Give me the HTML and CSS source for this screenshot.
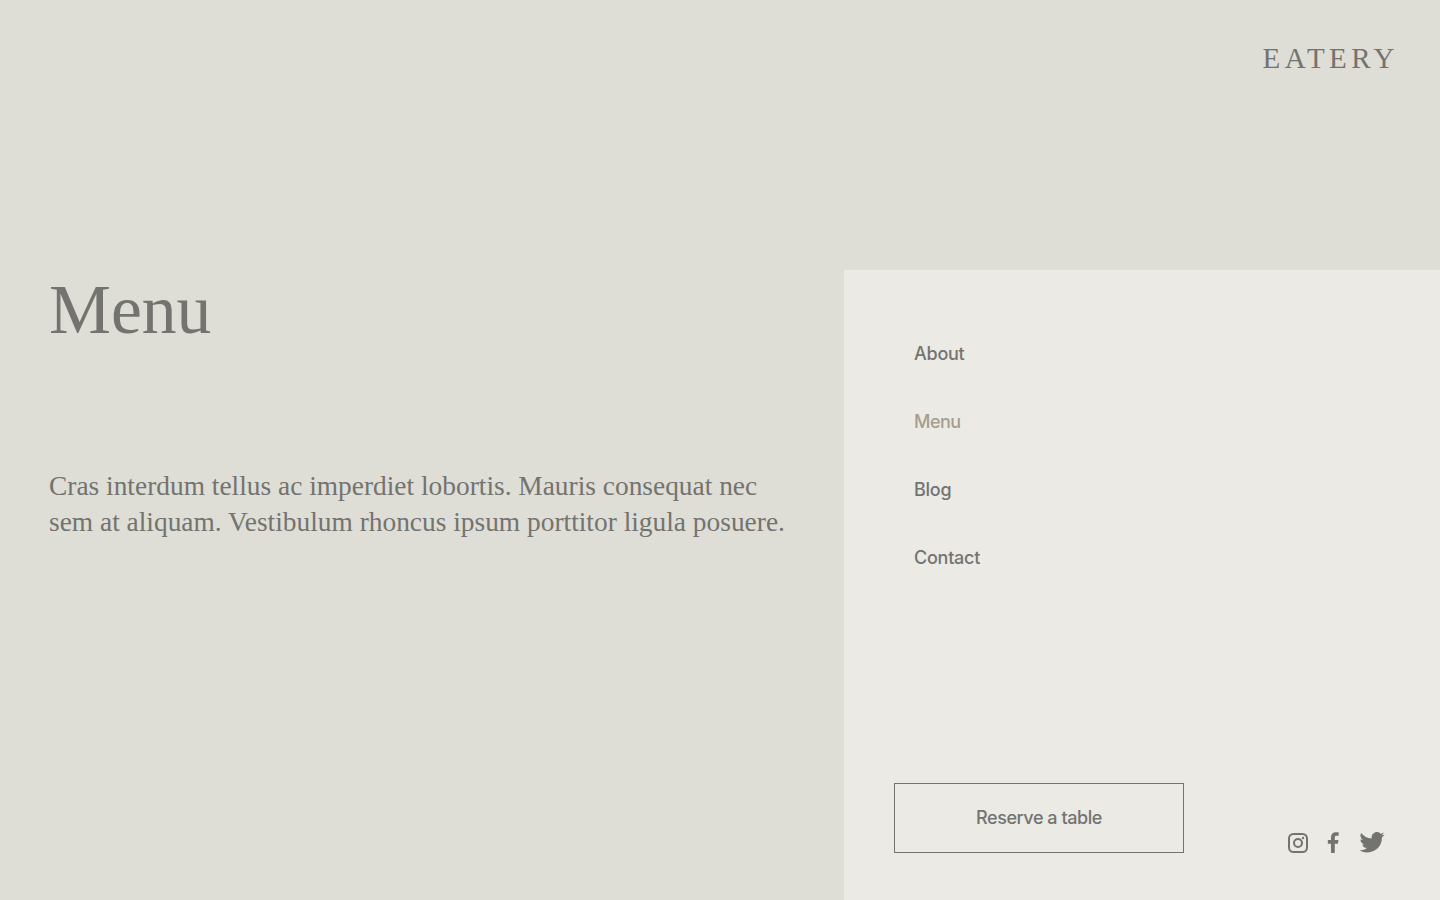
FILE: index.html
```html
<!DOCTYPE html>
<html lang="en">
<head>
    <meta charset="UTF-8">
    <meta name="viewport" content="width=device-width, initial-scale=1.0">
    <title>Eatery - Menu</title>
    <link rel="stylesheet" href="styles.css">
</head>
<body>

    <header class="top">
        <div class="logo">EATERY</div>
    </header>

    <div class="columns">
        <main class="content">
            <h1>Menu</h1>
            <p>Cras interdum tellus ac imperdiet lobortis. Mauris consequat nec sem at aliquam. Vestibulum rhoncus ipsum porttitor ligula posuere.</p>
        </main>

        <aside class="panel">
            <nav class="nav">
                <a href="#">About</a>
                <a href="#" class="active">Menu</a>
                <a href="#">Blog</a>
                <a href="#">Contact</a>
            </nav>

            <div class="panel-bottom">
                <a href="#" class="reserve">Reserve a table</a>
                <div class="social">
                    <svg class="icon-insta" width="20" height="20" viewBox="0 0 20 20" fill="none" stroke="#737370" stroke-width="2">
                        <rect x="1" y="1" width="18" height="18" rx="4.5"/>
                        <circle cx="10" cy="10" r="4"/>
                        <circle cx="15" cy="5" r="1.2" fill="#737370" stroke="none"/>
                    </svg>
                    <svg class="icon-fb" width="13" height="21" viewBox="0 0 12 20" fill="#737370">
                        <path d="M3.6 20V11.2H.6V7.700h3V5.100C3.600 2 5.500.3 8.200.3c1.300 0 2.400.1 2.700.1v3.200H9c-1.500 0-1.800.7-1.800 1.800v2.300h3.500l-.5 3.500h-3V20z"/>
                    </svg>
                    <svg class="icon-tw" width="26" height="21" viewBox="0 0 24 20" fill="#737370">
                        <path d="M24 2.400a9.800 9.800 0 0 1-2.800.8A4.900 4.900 0 0 0 23.300.5a9.800 9.800 0 0 1-3.100 1.200 4.900 4.900 0 0 0-8.400 4.500A14 14 0 0 1 1.700.9a4.900 4.900 0 0 0 1.500 6.600 4.900 4.900 0 0 1-2.200-.6v.1a4.900 4.900 0 0 0 3.900 4.800 4.900 4.900 0 0 1-2.200.1 4.900 4.900 0 0 0 4.600 3.400A9.900 9.900 0 0 1 0 17.300 14 14 0 0 0 7.500 19.500c9.100 0 14-7.500 14-14v-.6A10 10 0 0 0 24 2.400z"/>
                    </svg>
                </div>
            </div>
        </aside>
    </div>

</body>
</html>
```

FILE: styles.css
```css
* {
    box-sizing: border-box;
}

html, body {
    margin: 0;
    height: 100%;
}

body {
    display: flex;
    flex-direction: column;
    background-color: #deded6;
    color: #737370;
    font-family: "Liberation Serif", serif;
    overflow: hidden;
}

.top {
    height: 270px;
    display: flex;
    justify-content: flex-end;
    padding: 43px 45px 0 0;
}

.logo {
    font-size: 29px;
    line-height: 30px;
    letter-spacing: 4.5px;
    margin-right: -4px;
}

.columns {
    flex: 1;
    display: flex;
}

.content {
    flex: 1;
    padding: 0 40px 0 49px;
}

h1 {
    margin: 0;
    font-size: 69.6px;
    font-weight: 400;
    line-height: 80px;
}

.content p {
    margin: 118px 0 0;
    font-size: 27.4px;
    line-height: 36px;
}

.panel {
    width: 596px;
    background-color: #ebeae5;
    padding: 72px 56px 47px 50px;
    display: flex;
    flex-direction: column;
    justify-content: space-between;
    font-family: "Inter", sans-serif;
}

.nav {
    display: flex;
    flex-direction: column;
    gap: 44px;
    padding-left: 20px;
}

.nav a {
    font-size: 18px;
    line-height: 24px;
    font-weight: 500;
    letter-spacing: -0.25px;
    color: #737370;
    text-decoration: none;
}

.nav a.active {
    color: #a59e8d;
    letter-spacing: -0.5px;
}

.panel-bottom {
    display: flex;
    justify-content: space-between;
    align-items: flex-end;
}

.reserve {
    width: 290px;
    height: 70px;
    border: 1px solid #737370;
    padding-bottom: 2px;
    display: flex;
    align-items: center;
    justify-content: center;
    font-size: 18px;
    font-weight: 500;
    letter-spacing: -0.45px;
    color: #737370;
    text-decoration: none;
}

.social {
    display: flex;
    align-items: center;
    gap: 19px;
    margin-right: -1px;
}
```
